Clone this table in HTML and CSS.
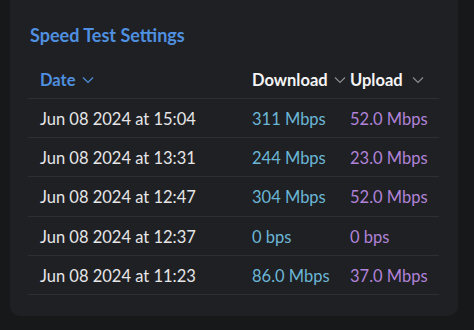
FILE: index.html
```html
<!DOCTYPE html>
<html>
<head>
<meta charset="utf-8">
<link rel="stylesheet" href="styles.css">
</head>
<body>
<div class="card">
  <h2 class="title">Speed Test Settings</h2>
  <div class="table">
    <div class="row head">
      <div class="c date sort">Date <svg class="chev" viewBox="0 0 12 8"><path d="M1 1.5 L6 6.5 L11 1.5"/></svg></div>
      <div class="c dl"><span class="hd">Download</span> <svg class="chev" viewBox="0 0 12 8"><path d="M1 1.5 L6 6.5 L11 1.5"/></svg></div>
      <div class="c ul"><span class="hd">Upload</span> <svg class="chev" viewBox="0 0 12 8"><path d="M1 1.5 L6 6.5 L11 1.5"/></svg></div>
    </div>
    <div class="row"><div class="c date">Jun 08 2024 at 15:04</div><div class="c dl v">311 Mbps</div><div class="c ul v">52.0 Mbps</div></div>
    <div class="row"><div class="c date">Jun 08 2024 at 13:31</div><div class="c dl v">244 Mbps</div><div class="c ul v">23.0 Mbps</div></div>
    <div class="row"><div class="c date">Jun 08 2024 at 12:47</div><div class="c dl v">304 Mbps</div><div class="c ul v">52.0 Mbps</div></div>
    <div class="row"><div class="c date">Jun 08 2024 at 12:37</div><div class="c dl v">0 bps</div><div class="c ul v">0 bps</div></div>
    <div class="row"><div class="c date">Jun 08 2024 at 11:23</div><div class="c dl v">86.0 Mbps</div><div class="c ul v">37.0 Mbps</div></div>
  </div>
</div>
</body>
</html>
```
FILE: styles.css
```css
html, body {
  margin: 0;
  padding: 0;
  background: #17181a;
  font-family: Lato, "Open Sans", sans-serif;
}
body {
  width: 474px;
  height: 330px;
  overflow: hidden;
}
.card {
  margin-left: 10px;
  width: 448px;
  height: 316px;
  box-sizing: border-box;
  background: #1f2023;
  border-radius: 0 0 10px 10px;
  padding: 25px 0 0 18px;
}
.title {
  margin: 0 0 0 2px;
  font-size: 18px;
  font-weight: 700;
  color: #4f90e0;
  line-height: 20px;
}
.table {
  margin-top: 15px;
  width: 411px;
}
.row {
  display: flex;
  align-items: center;
  height: 39.2px;
  box-sizing: border-box;
  padding-top: 2px;
  border-bottom: 1px solid #2e2f33;
  font-size: 16.5px;
  color: #e6e6e8;
}
.row.head {
  height: 39px;
  font-weight: 700;
}
.c { white-space: nowrap; display: flex; align-items: center; }
.date { width: 212px; padding-left: 12px; }
.dl { width: 98px; }
.ul { flex: 1; }
.sort { color: #4f90e0; }
.hd { color: #f4f4f6; }
.chev {
  width: 12px;
  height: 8px;
  margin-left: 7px;
  fill: none;
  stroke: #8a8b90;
  stroke-width: 1.2;
}
.sort .chev { stroke: #4f90e0; }
.dl .chev { margin-left: 6px; }
.ul .chev { margin-left: 9px; }
.dl.v { color: #6bb6d6; }
.ul.v { color: #b083d8; }
```
